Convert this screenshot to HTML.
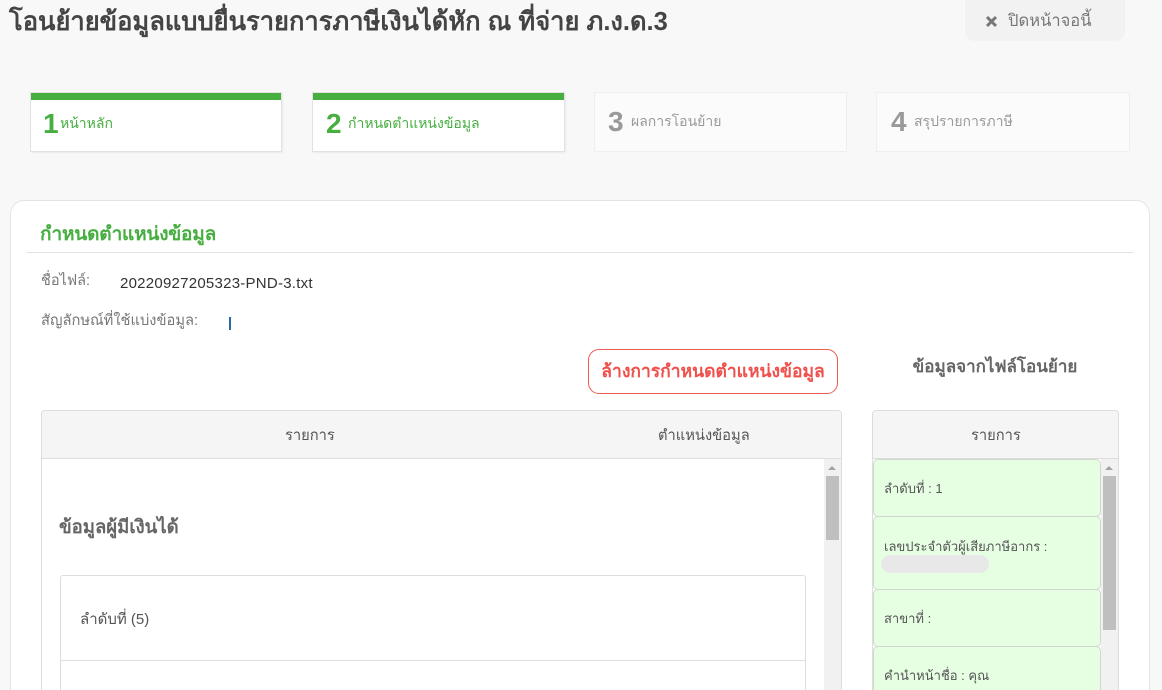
<!DOCTYPE html>
<html lang="th"><head><meta charset="utf-8"><title>โอนย้ายข้อมูล</title>
<style>
html,body{margin:0;padding:0;width:1162px;height:690px;overflow:hidden}
body{background:#f8f8f8;font-family:"Liberation Sans",sans-serif;color:#444}
#w{position:absolute;left:0;top:0;width:1162px;height:690px;overflow:hidden}
.a{position:absolute;white-space:nowrap}
.step{position:absolute;top:92px;width:250px;height:58px;background:#fff;border:1px solid #e2e2e2;box-shadow:1px 1px 2px rgba(0,0,0,.06)}
.step.on::before{content:"";position:absolute;left:0;right:0;top:0;height:7px;background:#47ae40}
.step.off{background:#fbfbfb;border-color:#efefef;box-shadow:none}
.num{position:absolute;font-size:28px;font-weight:bold;line-height:32px}
.lbl{position:absolute;font-size:14px;line-height:18px;white-space:nowrap}
.g{color:#47ae40}.o{color:#999}
.sb{position:absolute;width:17px;background:#f1f1f1}
.tri{position:absolute;width:0;height:0;border-left:4px solid transparent;border-right:4px solid transparent;border-bottom:4px solid #a3a3a3}
.th{position:absolute;font-size:14.7px;color:#555;line-height:20px;white-space:nowrap}
.it{position:absolute;left:873px;width:226px;background:#e6ffe3;border:1px solid #cfd8cc;border-radius:5px}
.it span{position:absolute;left:10px;font-size:13px;line-height:18px;color:#555;white-space:nowrap}
</style></head><body><div id="w">
<div class="a" style="left:9px;top:3px;font-size:25.5px;line-height:38px;color:#444;font-weight:bold">โอนย้ายข้อมูลแบบยื่นรายการภาษีเงินได้หัก ณ ที่จ่าย ภ.ง.ด.3</div>
<div class="a" style="left:965px;top:0;width:160px;height:41px;background:#f2f2f2;border-radius:0 0 10px 10px"></div>
<svg class="a" style="left:985px;top:15px" width="13" height="13" viewBox="0 0 13 13"><path d="M2 2L11 11M11 2L2 11" stroke="#777" stroke-width="3"/></svg>
<div class="a" style="left:1008px;top:11px;font-size:16.5px;line-height:20px;color:#777">ปิดหน้าจอนี้</div>

<div class="step on" style="left:30px"><div class="num g" style="left:12px;top:15px">1</div><div class="lbl g" style="left:29px;top:21px">หน้าหลัก</div></div>
<div class="step on" style="left:312px;width:251px"><div class="num g" style="left:13px;top:15px">2</div><div class="lbl g" style="left:35px;top:21px">กำหนดตำแหน่งข้อมูล</div></div>
<div class="step off" style="left:594px;width:251px"><div class="num o" style="left:13px;top:13px">3</div><div class="lbl o" style="left:36px;top:19px">ผลการโอนย้าย</div></div>
<div class="step off" style="left:876px;width:252px"><div class="num o" style="left:14px;top:13px">4</div><div class="lbl o" style="left:37px;top:19px">สรุปรายการภาษี</div></div>

<div class="a" style="left:10px;top:200px;width:1138px;height:500px;background:#fff;border:1px solid #e4e4e4;border-radius:14px"></div>
<div class="a g" style="left:40px;top:221px;font-size:19px;line-height:28px;font-weight:bold;letter-spacing:-.2px">กำหนดตำแหน่งข้อมูล</div>
<div class="a" style="left:26px;top:252px;width:1108px;height:1px;background:#e2e2e8"></div>
<div class="a" style="left:41px;top:271px;font-size:14.5px;line-height:20px;color:#777">ชื่อไฟล์:</div>
<div class="a" style="left:120px;top:274px;font-size:15px;line-height:20px;color:#333;letter-spacing:.25px">20220927205323-PND-3.txt</div>
<div class="a" style="left:41px;top:311px;font-size:14.7px;line-height:20px;color:#777">สัญลักษณ์ที่ใช้แบ่งข้อมูล:</div>
<div class="a" style="left:229px;top:317px;width:2px;height:13px;background:#2a6a9e"></div>

<div class="a" style="left:588px;top:349px;width:248px;height:43px;border:1px solid #ee5a50;border-radius:11px;background:#fff;text-align:center;line-height:43px;font-size:17.5px;font-weight:bold;color:#f0504c">ล้างการกำหนดตำแหน่งข้อมูล</div>
<div class="a" style="left:872px;top:355px;width:246px;text-align:center;font-size:17px;line-height:24px;font-weight:bold;color:#666">ข้อมูลจากไฟล์โอนย้าย</div>

<div class="a" style="left:41px;top:410px;width:799px;height:290px;border:1px solid #ddd;border-radius:4px 4px 0 0;background:#fff"></div>
<div class="a" style="left:42px;top:411px;width:799px;height:47px;background:#f5f5f5;border-bottom:1px solid #ddd;border-radius:4px 4px 0 0"></div>
<div class="th" style="left:285px;top:426px">รายการ</div>
<div class="th" style="left:658px;top:426px">ตำแหน่งข้อมูล</div>
<div class="sb" style="left:824px;top:459px;height:240px"></div>
<div class="tri" style="left:828px;top:466px"></div>
<div class="a" style="left:826px;top:476px;width:13px;height:64px;background:#bfbfbf"></div>

<div class="a" style="left:59px;top:513px;font-size:18.5px;line-height:28px;font-weight:bold;color:#666">ข้อมูลผู้มีเงินได้</div>
<div class="a" style="left:60px;top:575px;width:744px;height:130px;border:1px solid #ddd;border-radius:3px;background:#fff"></div>
<div class="a" style="left:61px;top:660px;width:744px;height:1px;background:#ddd"></div>
<div class="a" style="left:80px;top:610px;font-size:15px;line-height:20px;color:#555">ลำดับที่ (5)</div>

<div class="a" style="left:872px;top:410px;width:245px;height:290px;border:1px solid #ddd;border-radius:4px 4px 0 0;background:#fff"></div>
<div class="a" style="left:873px;top:411px;width:245px;height:47px;background:#f5f5f5;border-bottom:1px solid #ddd;border-radius:4px 4px 0 0"></div>
<div class="th" style="left:971px;top:426px">รายการ</div>
<div class="sb" style="left:1101px;top:459px;height:240px"></div>
<div class="tri" style="left:1105px;top:466px"></div>
<div class="a" style="left:1103px;top:476px;width:13px;height:154px;background:#bfbfbf"></div>
<div class="it" style="top:459px;height:56px"><span style="top:20px">ลำดับที่ : 1</span></div>
<div class="it" style="top:516px;height:72px"><span style="top:21px">เลขประจำตัวผู้เสียภาษีอากร :</span><div style="position:absolute;left:7px;top:38px;width:108px;height:18px;border-radius:9px;background:#e8e8e8"></div></div>
<div class="it" style="top:589px;height:56px"><span style="top:20px">สาขาที่ :</span></div>
<div class="it" style="top:646px;height:60px"><span style="top:20px">คำนำหน้าชื่อ : คุณ</span></div>
</div></body></html>
